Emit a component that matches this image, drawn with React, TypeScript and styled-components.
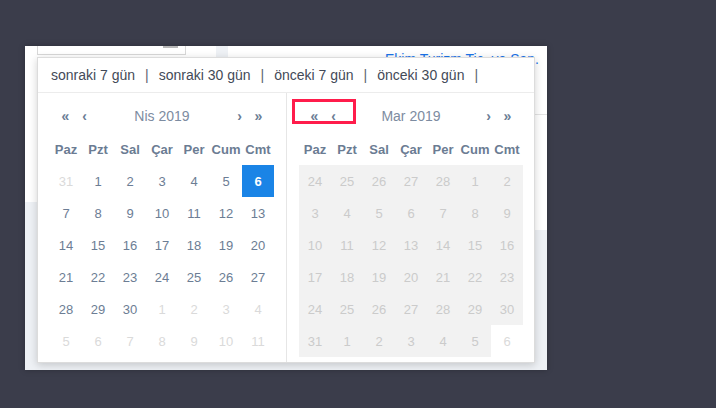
import React from 'react';
import styled, { createGlobalStyle } from 'styled-components';

const GlobalStyle = createGlobalStyle`
	html, body {
		margin: 0;
		padding: 0;
		background: #3a3c4a;
		font-family: 'Liberation Sans', Arial, Helvetica, sans-serif;
	}
`;

const Screen = styled.div`
	width: 716px;
	height: 408px;
	padding: 46px 0 0 25px;
	box-sizing: border-box;
	background: #3b3d4b;
`;

const Window = styled.div`
	position: relative;
	width: 522px;
	height: 324px;
	display: flex;
	gap: 12px;
	background: #eef1f5;
	overflow: hidden;
	box-shadow: 0 0 6px rgba(0, 0, 0, 0.25);
`;

const Card = styled.div<{ $w: number; $h: number }>`
	width: ${(p) => p.$w}px;
	height: ${(p) => p.$h}px;
	background: #fff;
	display: flex;
	flex-direction: column;
`;

const InputStub = styled.div`
	position: relative;
	margin-left: 12px;
	width: 147px;
	height: 8px;
	border: 1px solid #d8d8d8;
	border-top: none;
`;

const InputIcon = styled.span`
	position: absolute;
	left: 125px;
	top: 0;
	width: 15px;
	height: 2px;
	background: #b8b8b8;
`;

const Link = styled.a`
	align-self: flex-end;
	margin: 5px 8px 0 0;
	font-size: 14px;
	line-height: 16px;
	color: #1a73e8;
	text-decoration: none;
`;

const Rule = styled.div`
	margin-top: 47px;
	height: 1px;
	background: #e3e3e3;
`;

const Popup = styled.div`
	position: absolute;
	left: 12px;
	top: 11px;
	width: 496px;
	background: #fff;
	border: 1px solid #dcdcdc;
	box-shadow: 0 2px 8px rgba(0, 0, 0, 0.18);
`;

const Presets = styled.div`
	height: 34px;
	display: flex;
	align-items: center;
	gap: 10px;
	padding-left: 13px;
	border-bottom: 1px solid #ececec;
	font-size: 14px;
	color: #434a58;
`;

const Pipe = styled.span`
	color: #5d6472;
`;

const Calendars = styled.div`
	display: flex;
`;

const Calendar = styled.div<{ $divider?: boolean }>`
	padding: 9px 12px 5px;
	box-sizing: border-box;
	border-left: ${(p) => (p.$divider ? '1px solid #e6e6e6' : 'none')};
	width: ${(p) => (p.$divider ? 249 : 248)}px;
`;

const Nav = styled.div`
	position: relative;
	height: 31px;
	display: flex;
	align-items: center;
	padding: 0 6px 3px;
	box-sizing: border-box;
`;

const NavBtn = styled.span`
	width: 19px;
	text-align: center;
	font-size: 14px;
	font-weight: bold;
	color: #6b7d95;
`;

const Title = styled.div`
	flex: 1;
	text-align: center;
	font-size: 14px;
	color: #7d8ca1;
`;

const Highlight = styled.div`
	position: absolute;
	left: -7px;
	top: -3px;
	width: 58px;
	height: 19px;
	border: 3px solid #ff1c4b;
`;

const Grid = styled.div`
	display: grid;
	grid-template-columns: repeat(7, 32px);
	grid-auto-rows: 32px;
`;

const Head = styled.div`
	display: flex;
	align-items: center;
	justify-content: center;
	font-size: 13px;
	font-weight: bold;
	color: #6b7c93;
`;

type DayKind = 'on' | 'off' | 'sel' | 'dis';

const Day = styled.div<{ $kind: DayKind }>`
	display: flex;
	align-items: center;
	justify-content: center;
	font-size: 13px;
	font-weight: ${(p) => (p.$kind === 'sel' ? 'bold' : 'normal')};
	color: ${(p) =>
		p.$kind === 'on'
			? '#6c7d94'
			: p.$kind === 'sel'
			? '#fff'
			: p.$kind === 'dis'
			? '#cbcbcb'
			: '#dadada'};
	background: ${(p) =>
		p.$kind === 'sel' ? '#1a84e6' : p.$kind === 'dis' ? '#f2f2f2' : 'transparent'};
`;

const weekDays = ['Paz', 'Pzt', 'Sal', 'Çar', 'Per', 'Cum', 'Cmt'];

const presets = ['sonraki 7 gün', 'sonraki 30 gün', 'önceki 7 gün', 'önceki 30 gün'];

const range = (a: number, b: number) => Array.from({ length: b - a + 1 }, (_, i) => a + i);

const aprilDays: { n: number; kind: DayKind }[] = [
	{ n: 31, kind: 'off' },
	...range(1, 5).map((n) => ({ n, kind: 'on' as DayKind })),
	{ n: 6, kind: 'sel' },
	...range(7, 30).map((n) => ({ n, kind: 'on' as DayKind })),
	...range(1, 11).map((n) => ({ n, kind: 'off' as DayKind })),
];

const marchDays: { n: number; kind: DayKind }[] = [
	...range(24, 28).map((n) => ({ n, kind: 'dis' as DayKind })),
	...range(1, 31).map((n) => ({ n, kind: 'dis' as DayKind })),
	...range(1, 5).map((n) => ({ n, kind: 'dis' as DayKind })),
	{ n: 6, kind: 'off' },
];

interface MonthProps {
	title: string;
	days: { n: number; kind: DayKind }[];
	divider?: boolean;
	highlight?: boolean;
}

const Month: React.FC<MonthProps> = ({ title, days, divider, highlight }) => (
	<Calendar $divider={divider}>
		<Nav>
			{highlight && <Highlight />}
			<NavBtn>«</NavBtn>
			<NavBtn>‹</NavBtn>
			<Title>{title}</Title>
			<NavBtn>›</NavBtn>
			<NavBtn>»</NavBtn>
		</Nav>
		<Grid>
			{weekDays.map((d) => (
				<Head key={d}>{d}</Head>
			))}
			{days.map((d, i) => (
				<Day key={i} $kind={d.kind}>
					{d.n}
				</Day>
			))}
		</Grid>
	</Calendar>
);

const App: React.FC = () => {
	return (
		<>
			<GlobalStyle />
			<Screen>
				<Window>
					<Card $w={191} $h={156}>
						<InputStub>
							<InputIcon />
						</InputStub>
					</Card>
					<Card $w={319} $h={184}>
						<Link>Ekim Turizm Tic. ve San.</Link>
						<Rule />
					</Card>
					<Popup>
						<Presets>
							{presets.map((p) => (
								<React.Fragment key={p}>
									<span>{p}</span>
									<Pipe>|</Pipe>
								</React.Fragment>
							))}
						</Presets>
						<Calendars>
							<Month title="Nis 2019" days={aprilDays} />
							<Month title="Mar 2019" days={marchDays} divider highlight />
						</Calendars>
					</Popup>
				</Window>
			</Screen>
		</>
	);
};

export default App;
